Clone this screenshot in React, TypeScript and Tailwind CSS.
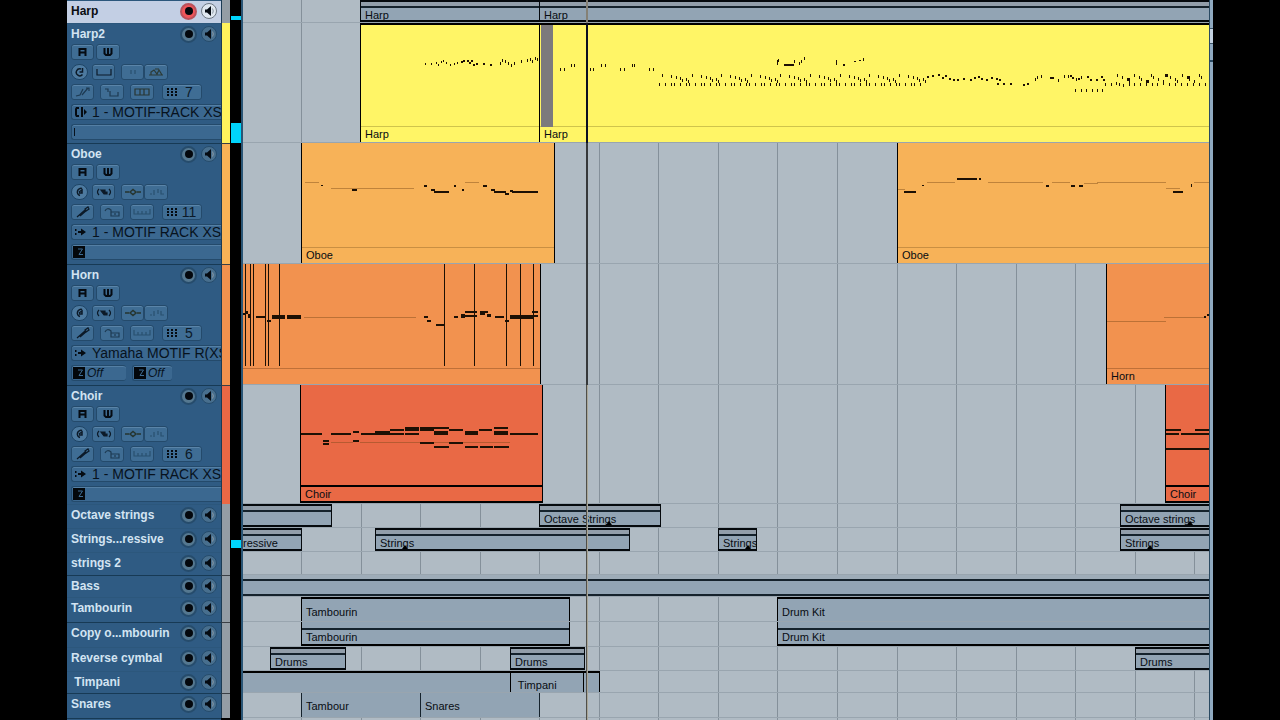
import React from 'react';
import clsx from 'clsx';

// Timeline pixels hidden to the left of the first visible one
const SCROLL_X = 243;
const BAR_WIDTH = 59.55;
const FIRST_BAR = 301;
const OPEN_END = 4000;

type Note = [x: number, y: number, w: number, h: number];

interface Clip {
  start: number;
  end: number;
  label?: string;
  kind: 'folded' | 'notes' | 'plain' | 'lower' | 'open' | 'bass';
  color?: string;
  foot?: string;
  notes?: Note[];
  thin?: Note[];
  marker?: number;
}

interface Track {
  name: string;
  height: string;
  strip: string;
  level?: string;
  selected?: boolean;
  divider?: boolean;
  output?: string;
  channel?: string;
  extra?: 'empty' | 'patch' | 'off';
  clips: Clip[];
}

const dots = (points: [number, number][], w = 1, h = 3): Note[] =>
  points.map(([x, y]) => [x, y, w, h]);

const harpIntro: Note[] = [
  ...dots([[425, 38], [431, 38], [436, 37], [438, 39], [441, 36], [443, 35], [446, 37], [450, 39], [454, 38], [457, 37]], 1, 2),
  ...dots([[461, 36], [463, 35], [467, 35], [469, 37], [471, 35], [473, 39], [476, 38], [483, 38], [490, 39]], 2, 2),
  ...dots([[500, 37], [502, 34], [505, 35], [508, 37], [511, 39], [514, 37], [521, 35], [527, 34], [530, 33], [532, 35], [535, 32], [537, 33]]),
];

const harpPattern: Note[] = [0, 1, 2, 3, 4, 5, 6, 7, 8].flatMap((i) => {
  const x = 662 + Math.round(i * 29.6);
  return dots([[x, 49], [x + 9, 50], [x + 14, 51], [x + 18, 52], [x + 20, 54], [x + 24, 53], [x + 26, 55]]);
});

const harpBass: Note[] = Array.from({ length: 53 }, (_, i): Note => [659 + i * 5 + (i % 3), 58, 1, 3]);

const harpTail: Note[] = Array.from({ length: 22 }, (_, i): Note => [
  1117 + i * 4 + (i % 3), 49 + ((i * 5) % 4) * 2, i % 5 === 2 ? 3 : 1, 3,
]);

const harpMain: Note[] = [
  ...dots([
    [542, 39], [544, 39], [560, 43], [564, 43], [571, 39], [574, 39], [590, 43], [593, 43],
    [601, 39], [605, 39], [620, 43], [624, 43], [632, 39], [634, 39], [649, 43], [653, 43],
  ]),
  ...harpPattern,
  ...harpBass,
  [777, 35, 1, 5], [778, 34, 1, 3], [784, 39, 10, 2], [794, 35, 1, 3], [799, 37, 1, 3], [801, 35, 1, 3], [804, 32, 1, 3],
  [836, 35, 1, 5], [843, 39, 2, 2], [854, 36, 2, 1], [859, 35, 2, 1], [863, 33, 1, 3],
  ...dots([
    [927, 51], [932, 50], [938, 49], [942, 52], [945, 50], [949, 53], [953, 54], [957, 54], [963, 53],
    [970, 54], [974, 52], [978, 51], [981, 53], [986, 54], [991, 52], [996, 53], [999, 54],
  ], 2, 2),
  ...dots([[997, 58], [1003, 58], [1010, 58], [1023, 59], [1027, 58]], 2, 2),
  ...dots([[1035, 53], [1037, 51], [1041, 50], [1058, 54], [1064, 50], [1068, 50], [1076, 53], [1081, 51]]),
  [1050, 52, 4, 2],
  ...dots([[1070, 50], [1072, 52], [1078, 53], [1087, 51], [1090, 54], [1096, 54], [1101, 51], [1103, 54]], 2, 2),
  ...harpTail,
  ...dots([
    [1105, 58], [1111, 58], [1116, 57], [1119, 58], [1123, 59], [1129, 58], [1134, 58], [1140, 58], [1146, 58],
    [1152, 58], [1157, 58], [1163, 57], [1169, 58], [1175, 58], [1181, 58], [1187, 58], [1193, 58], [1199, 58], [1205, 58],
  ]),
  ...dots([[1075, 64], [1081, 64], [1086, 64], [1092, 64], [1097, 64], [1102, 64]]),
];

const oboeFirst: Note[] = [
  [321, 42, 2, 1], [352, 46, 5, 2], [424, 42, 3, 2], [431, 46, 4, 2], [434, 48, 15, 2], [454, 42, 2, 2],
  [462, 46, 2, 2], [483, 42, 4, 2], [491, 46, 4, 2], [494, 48, 12, 2], [505, 50, 4, 2], [510, 47, 3, 2], [512, 48, 26, 2],
];

const hornFirst: Note[] = [
  [245, 0, 1, 102], [250, 0, 1, 102], [253, 0, 1, 102], [265, 0, 1, 102], [268, 0, 1, 102], [279, 0, 1, 102],
  [444, 0, 1, 102], [474, 0, 1, 102], [506, 0, 1, 102], [520, 0, 1, 102], [533, 0, 1, 102],
  [243, 49, 3, 2], [245, 47, 3, 3], [248, 50, 3, 4], [256, 52, 9, 2], [267, 56, 4, 2],
  [272, 51, 13, 4], [287, 51, 14, 4],
  [424, 52, 4, 2], [427, 56, 4, 2], [436, 60, 8, 2], [454, 52, 4, 2], [461, 50, 4, 4], [465, 47, 12, 2], [463, 51, 14, 2],
  [480, 47, 5, 4], [484, 47, 4, 2], [487, 50, 4, 3], [495, 52, 9, 2], [505, 56, 4, 2], [510, 51, 24, 4], [532, 47, 6, 2], [532, 51, 6, 2],
];

const choirFirst: Note[] = [
  [300, 48, 22, 2], [323, 55, 6, 2], [323, 58, 6, 2], [331, 48, 20, 2], [353, 46, 6, 2], [353, 55, 6, 2],
  [361, 48, 43, 2], [375, 46, 15, 3], [390, 44, 14, 2], [405, 42, 14, 4], [405, 48, 14, 2], [420, 42, 29, 2],
  [420, 44, 14, 2], [434, 46, 14, 4], [449, 44, 14, 2], [465, 46, 13, 4], [479, 44, 13, 2], [494, 42, 14, 2],
  [494, 46, 14, 4], [510, 48, 28, 2], [420, 57, 14, 2], [434, 61, 15, 2], [449, 57, 14, 2], [465, 61, 13, 2],
  [480, 61, 13, 2], [494, 61, 15, 2],
];

const tracks: Track[] = [
  {
    name: 'Harp', height: 'h-[23px]', strip: 'bg-[#949da5]', level: 'top-4 h-1', selected: true,
    clips: [
      { start: 360, end: 540, label: 'Harp', kind: 'folded' },
      { start: 539, end: OPEN_END, label: 'Harp', kind: 'folded' },
    ],
  },
  {
    name: 'Harp2', height: 'h-[120px]', strip: 'bg-[#fff25c]', level: 'bottom-0 h-5',
    output: '1 - MOTIF-RACK XS', channel: '7', extra: 'empty',
    clips: [
      { start: 360, end: 540, label: 'Harp', kind: 'notes', color: 'bg-[#fff566] border-t-2', foot: 'border-t border-[#cfc44c]', notes: harpIntro },
      { start: 539, end: OPEN_END, label: 'Harp', kind: 'notes', color: 'bg-[#fff566] border-t-2', foot: 'border-t border-[#cfc44c]', notes: harpMain },
    ],
  },
  {
    name: 'Oboe', height: 'h-[121px]', strip: 'bg-[#f8b256]', divider: true,
    output: '1 - MOTIF RACK XS', channel: '11', extra: 'patch',
    clips: [
      {
        start: 301, end: 555, label: 'Oboe', kind: 'notes', color: 'bg-[#f7b258]', foot: 'border-t border-[#c98f42]', notes: oboeFirst,
        thin: [[305, 39, 14, 1], [331, 45, 83, 1], [465, 39, 14, 1]],
      },
      {
        start: 897, end: OPEN_END, label: 'Oboe', kind: 'notes', color: 'bg-[#f7b258]', foot: 'border-t border-[#c98f42]',
        notes: [[904, 48, 12, 2], [922, 42, 2, 1], [957, 35, 20, 2], [979, 35, 2, 2], [1046, 42, 3, 2], [1071, 42, 4, 2], [1079, 42, 4, 2], [1173, 48, 10, 2], [1191, 41, 1, 3]],
        thin: [[898, 46, 7, 1], [927, 39, 28, 1], [988, 39, 55, 1], [1052, 39, 18, 1], [1084, 40, 14, 1], [1097, 39, 69, 1], [1166, 45, 14, 1], [1194, 39, 30, 1]],
      },
    ],
  },
  {
    name: 'Horn', height: 'h-[121px]', strip: 'bg-[#f2924e]', divider: true,
    output: 'Yamaha MOTIF R(XS', channel: '5', extra: 'off',
    clips: [
      { start: 240, end: 541, kind: 'notes', color: 'bg-[#f2924f]', foot: 'border-t border-[#bf7038]', notes: hornFirst, thin: [[304, 53, 112, 1]] },
      {
        start: 1106, end: OPEN_END, label: 'Horn', kind: 'notes', color: 'bg-[#f2924f]', foot: 'border-t border-[#bf7038]',
        notes: [[1204, 52, 2, 2], [1207, 50, 4, 2]], thin: [[1107, 57, 59, 1], [1164, 53, 40, 1]],
      },
    ],
  },
  {
    name: 'Choir', height: 'h-[119px]', strip: 'bg-[#ea6845]', divider: true,
    output: '1 - MOTIF RACK XS', channel: '6', extra: 'patch',
    clips: [
      { start: 300, end: 543, label: 'Choir', kind: 'notes', color: 'bg-[#e96945] border-b-2', foot: 'border-t-2 border-black', notes: choirFirst, thin: [[331, 57, 22, 1], [360, 57, 150, 1]] },
      {
        start: 1165, end: OPEN_END, label: 'Choir', kind: 'notes', color: 'bg-[#e96945] border-b-2', foot: 'border-t-2 border-black',
        notes: [[1165, 44, 16, 2], [1195, 44, 30, 2], [1165, 48, 14, 2], [1181, 48, 44, 2], [1165, 63, 60, 2]],
      },
    ],
  },
  {
    name: 'Octave strings', height: 'h-6', strip: 'bg-[#949da5]',
    clips: [
      { start: 240, end: 332, kind: 'folded' },
      { start: 539, end: 661, label: 'Octave Strings', kind: 'folded', marker: 66 },
      { start: 1120, end: OPEN_END, label: 'Octave strings', kind: 'folded', marker: 66 },
    ],
  },
  {
    name: 'Strings...ressive', height: 'h-6', strip: 'bg-[#949da5]', level: 'bottom-1 h-2',
    clips: [
      { start: 238, end: 302, label: 'ressive', kind: 'folded' },
      { start: 375, end: 630, label: 'Strings', kind: 'folded', marker: 26 },
      { start: 718, end: 757, label: 'Strings', kind: 'folded', marker: 26 },
      { start: 1120, end: OPEN_END, label: 'Strings', kind: 'folded', marker: 26 },
    ],
  },
  { name: 'strings 2', height: 'h-[23px]', strip: 'bg-[#949da5]', clips: [] },
  { name: 'Bass', height: 'h-[22px]', strip: 'bg-[#949da5]', divider: true, clips: [{ start: 240, end: OPEN_END, kind: 'bass' }] },
  {
    name: 'Tambourin', height: 'h-[25px]', strip: 'bg-[#949da5]',
    clips: [
      { start: 301, end: 570, label: 'Tambourin', kind: 'plain' },
      { start: 777, end: OPEN_END, label: 'Drum Kit', kind: 'plain' },
    ],
  },
  {
    name: 'Copy o...mbourin', height: 'h-[25px]', strip: 'bg-[#949da5]', divider: true,
    clips: [
      { start: 301, end: 570, label: 'Tambourin', kind: 'lower' },
      { start: 777, end: OPEN_END, label: 'Drum Kit', kind: 'lower' },
    ],
  },
  {
    name: 'Reverse cymbal', height: 'h-6', strip: 'bg-[#949da5]',
    clips: [
      { start: 270, end: 346, label: 'Drums', kind: 'folded' },
      { start: 510, end: 585, label: 'Drums', kind: 'folded' },
      { start: 1135, end: OPEN_END, label: 'Drums', kind: 'folded' },
    ],
  },
  {
    name: ' Timpani', height: 'h-[22px]', strip: 'bg-[#949da5]',
    clips: [
      { start: 240, end: 511, kind: 'plain' },
      { start: 510, end: 584, label: ' Timpani', kind: 'plain' },
      { start: 583, end: 600, kind: 'plain' },
    ],
  },
  {
    name: 'Snares', height: 'h-[25px]', strip: 'bg-[#949da5]', divider: true,
    clips: [
      { start: 301, end: 421, label: 'Tambour', kind: 'open' },
      { start: 420, end: 540, label: 'Snares', kind: 'open' },
    ],
  },
];

const KEY = 'flex h-4 items-center justify-center rounded-[3px] border border-[#244a6b] bg-[#3f6d94] shadow-[inset_0_1px_0_#5a84a8] text-[#0c1a28]';
const FIELD = 'flex h-4 items-center rounded-l-[3px] border border-r-0 border-[#244a6b] bg-[#3b6890] shadow-[inset_0_1px_0_#547fa4]';

const SpeakerIcon = () => (
  <svg viewBox="0 0 14 14" className="size-3.5">
    <path d="M3 5.5h2l4-3.5v10L5 8.5H3z" fill="#050b12" />
    <path d="M10.5 4.5q1.6 2.5 0 5" fill="none" stroke="#8d9aa5" />
  </svg>
);

const PatchIcon = () => (
  <svg viewBox="0 0 12 12" className="ml-px size-3 shrink-0">
    <path d="M0 0h12v12H0z" fill="#03070b" />
    <path d="M5 3h4.500L6 8.500h4" fill="none" stroke="#3f6d94" />
  </svg>
);

const Icon = ({ children }: { children: React.ReactNode }) => (
  <svg viewBox="0 0 18 12" className="h-3 w-[18px]" fill="none" stroke="currentColor" strokeWidth="1.2">
    {children}
  </svg>
);

const TrackControls = ({ track }: { track: Track }) => {
  const harp = track.extra === 'empty';
  return (
    <div className="flex flex-col gap-1">
      <div className="flex gap-0.5">
        <button aria-label="Read automation" className={clsx(KEY, 'w-[23px]')}>
          <svg viewBox="0 0 10 8" className="h-2 w-2.5" fill="none" stroke="#050b12" strokeWidth="2"><path d="M1.5 8V1h6v3.5h-6M7.5 4v4" /></svg>
        </button>
        <button aria-label="Write automation" className={clsx(KEY, 'w-6')}>
          <svg viewBox="0 0 10 8" className="h-2 w-2.5" fill="none" stroke="#050b12" strokeWidth="2"><path d="M1.5 0v5.500L3 7h4l1.500-1.500V0M5 0v7" /></svg>
        </button>
      </div>
      <div className="flex">
        <button aria-label="Edit instrument" className="mr-1 flex h-4 w-[17px] items-center justify-center rounded-full border border-[#1f4566] bg-[#4d7aa0] text-[#0c1a28]">
          <svg viewBox="0 0 10 10" className="size-2.5" fill="none" stroke="currentColor" strokeWidth="1.5">
            <path d={harp ? 'M6 2A3.500 3.500 0 1 0 7.500 7.500M4.500 5h3V1' : 'M7 1.500A3.500 3.500 0 1 0 5 8.500M4 5l3-2v3H4'} />
          </svg>
        </button>
        <button aria-label="Inserts" className={clsx(KEY, 'mr-1.5 w-[23px]')}>
          <Icon>{harp ? <path d="M2 3v6h14V3" /> : <><path d="M4 3Q1 6 4 9M14 3q3 3 0 6" /><path d="M6 4h4v2h2v2H9z" fill="currentColor" /></>}</Icon>
        </button>
        <button aria-label="Equalizer" className={clsx(KEY, 'w-[23px]')}>
          <Icon>{harp ? <path d="M7 4v4M11 4v4" stroke="#28506f" /> : <><path d="M1 6h4M13 6h4M6 6l3-2.500L12 6 9 8.500z" stroke="#26352f" strokeWidth="1.500" /></>}</Icon>
        </button>
        <button aria-label="Sends" className={clsx(KEY, 'w-6')}>
          <Icon>{harp ? <path d="M2 9h14M4 9V6l3-2 3 4 2-4 3 5M8 3h4" stroke="#2c3a35" /> : <path d="M3 8h2M7 4v5M11 3v4M14 4v4h3" stroke="#28506f" />}</Icon>
        </button>
      </div>
      <div className="flex">
        <button aria-label="Edit channel" className={clsx(KEY, 'mr-1.5 w-[23px]')}>
          <Icon>{harp ? <path d="M2 10l4-1 3-6M8 9l6-7M12 2h3v3" stroke="#1d3a52" /> : <path d="M3 11l8-7M6 10l7-6M11 3l3-2 1 2-3 2z" />}</Icon>
        </button>
        <button aria-label="Lock" className={clsx(KEY, 'mr-1.5 w-6')}>
          <Icon>{harp ? <path d="M2 3h3v3M7 5v5h8V6" stroke="#1d3a52" /> : <path d="M2 5q2-4 6-1v6h8V6H8M12 7v2" stroke="#1d3a52" />}</Icon>
        </button>
        <button aria-label="Lanes" className={clsx(KEY, 'mr-2 w-6')}>
          <Icon>{harp ? <path d="M2 3h14v6H2zM7 3v6M11 3v6" stroke="#293632" /> : <path d="M1 3v5h16V3M5 5v3M9 5v3M13 5v3" stroke="#28506f" />}</Icon>
        </button>
        <label className={clsx(KEY, 'w-10 pl-1')}>
          <svg viewBox="0 0 10 9" className="h-[9px] w-2.5 shrink-0" fill="#050b12">
            {[0, 4, 8].map((x) => [0, 3, 6].map((y) => <rect key={`${x}-${y}`} x={x} y={y} width="2" height="2" />))}
          </svg>
          <select aria-label={`${track.name} MIDI channel`} className="w-full appearance-none bg-transparent text-center text-sm leading-3.5 outline-none">
            <option>{track.channel}</option>
          </select>
        </label>
      </div>
      <label className={FIELD}>
        <svg viewBox="0 0 14 10" className="mr-1 ml-0.5 h-2.5 w-3.5 shrink-0" fill="#050b12">
          {harp ? <path d="M5 0H2L1 2v6l1 2h3V8H3V2h2zM7 0h2v10H7zM10 2l3 3-3 3z" /> : <path d="M1 2h1.500v2H1zM1 6h1.500v2H1zM4 4h3V1.500L12 5 7 8.500V6H4z" />}
        </svg>
        <select aria-label={`${track.name} output`} className="w-0 flex-1 appearance-none overflow-hidden bg-transparent text-sm leading-3.5 text-[#07121d] outline-none">
          <option>{track.output}</option>
        </select>
      </label>
      {track.extra === 'off' ? (
        <div className="flex gap-1.5">
          {['Bank', 'Program'].map((what, i) => (
            <label key={what} className={clsx(FIELD, 'rounded-r-[3px] border-r', i === 0 ? 'w-[55px]' : 'w-10')}>
              <PatchIcon />
              <select aria-label={what} className="ml-0.5 w-full appearance-none bg-transparent text-xs leading-3.5 text-[#07121d] italic outline-none">
                <option>Off</option>
              </select>
            </label>
          ))}
        </div>
      ) : (
        <button aria-label="Program" className={FIELD}>
          {track.extra === 'patch' ? <PatchIcon /> : <span className="ml-0.5 h-2 w-px bg-[#07121d]" />}
        </button>
      )}
    </div>
  );
};

const TrackHeader = ({ track }: { track: Track }) => (
  <div
    className={clsx(
      'flex flex-col overflow-hidden border-t pl-1',
      track.height,
      track.divider ? 'border-[#173a55]' : 'border-[#2c577c]',
      track.selected ? 'bg-[#c3cfe4]' : 'bg-[#2f5b83]',
    )}
  >
    <div className="flex h-5 shrink-0 items-center gap-1 pr-1">
      <span className={clsx('flex-1 text-xs font-bold whitespace-pre', track.selected ? 'text-[#0a0d12]' : 'text-[#d3e4f2]')}>
        {track.name}
      </span>
      <button
        aria-label={`Record ${track.name}`}
        className={clsx(
          'flex size-[17px] items-center justify-center rounded-full border-2',
          track.selected ? 'border-[#b8525c] bg-[#f0555a]' : 'border-[#264c6c] bg-[#557890]',
        )}
      >
        <span className="size-2 rounded-full bg-[#04080d]" />
      </button>
      <button
        aria-label={`Mute ${track.name}`}
        className={clsx(
          'flex size-4 items-center justify-center rounded-full border',
          track.selected ? 'border-[#6d7884] bg-[#dfe7f0]' : 'border-[#264c6c] bg-[#486f8e]',
        )}
      >
        <SpeakerIcon />
      </button>
    </div>
    {track.output && <TrackControls track={track} />}
  </div>
);

const NoteView = ({ clip }: { clip: Clip }) => {
  const width = Math.min(clip.end - clip.start, 1100);
  return (
    <svg width={width} height={102} viewBox={`${clip.start + 1} 0 ${width} 102`} className="block" shapeRendering="crispEdges">
      {clip.thin?.map(([x, y, w, h], i) => <rect key={i} x={x} y={y} width={w} height={h} fill="#7a4a18" opacity="0.45" />)}
      {clip.notes?.map(([x, y, w, h], i) => <rect key={i} x={x} y={y} width={w} height={h} fill="#1d1004" />)}
    </svg>
  );
};

const ClipView = ({ clip }: { clip: Clip }) => {
  const style = { left: clip.start - SCROLL_X, width: clip.end - clip.start };
  const label = (
    <span className="block overflow-hidden pl-1 text-[11px] leading-3.5 whitespace-pre text-[#080c12]">{clip.label}</span>
  );

  switch (clip.kind) {
    case 'notes':
      return (
        <div style={style} className={clsx('absolute inset-y-0 flex flex-col overflow-hidden border-x border-black', clip.color)}>
          <div className="flex-1 overflow-hidden"><NoteView clip={clip} /></div>
          <div className={clsx('h-4 shrink-0', clip.foot)}>{label}</div>
        </div>
      );
    case 'folded':
      return (
        <div style={style} className="absolute inset-y-0 overflow-hidden border-x border-y-2 border-[#05090d] bg-[#92a4b4]">
          <div className="h-1.5 border-b-2 border-[#15222c] bg-[#929eaa]" />
          {label}
          {clip.marker && (
            <svg viewBox="0 0 6 4" style={{ left: clip.marker }} className="absolute bottom-0 h-1 w-1.5"><path d="M0 4l3-4 3 4z" /></svg>
          )}
        </div>
      );
    case 'bass':
      return (
        <div style={style} className="absolute inset-y-0 border-b-2 border-[#15222c] bg-[#92a4b4]">
          <div className="h-1.5 border-b-2 border-[#15222c] bg-[#9eacb8]" />
        </div>
      );
    case 'lower':
      return (
        <div style={style} className="absolute inset-y-0 border-x border-b-2 border-black bg-[#92a4b4]">
          <div className="h-2 border-b-2 border-[#15222c]" />
          {label}
        </div>
      );
    case 'open':
      return <div style={style} className="absolute inset-y-0 border-x border-[#15222c] bg-[#92a4b4] pt-1.5">{label}</div>;
    default:
      return (
        <div style={style} className="absolute inset-y-0 flex flex-col justify-center border-x border-t-2 border-black bg-[#92a4b4] pt-1">
          {label}
        </div>
      );
  }
};

const GridLines = () => (
  <div className="absolute inset-0">
    {Array.from({ length: 40 }, (_, i) => (
      <span key={i} style={{ left: Math.round(FIRST_BAR + i * BAR_WIDTH) - SCROLL_X }} className="absolute inset-y-0 w-px bg-[#84909a]" />
    ))}
  </div>
);

const App = () => {
  return (
    <div className="min-h-screen overflow-hidden bg-black px-[67px] font-['Liberation_Sans',sans-serif]">
      <main className="flex">
        <div className="w-[154px] shrink-0">
          {tracks.map((track) => <TrackHeader key={track.name} track={track} />)}
          <div className="h-0.5 border-t border-[#173a55] bg-[#2f5b83]" />
        </div>

        <div className="w-[22px] shrink-0 border-r-2 border-[#2a5575] bg-black">
          {tracks.map((track) => (
            <div key={track.name} className={clsx('relative flex', track.height)}>
              <div className={clsx('w-[9px] border-l border-[#1c3b54]', track.strip, track.divider && 'border-t border-t-[#3a3f45]')} />
              {track.level && <span className={clsx('absolute right-0 left-2.5 bg-[#00d4fb]', track.level)} />}
            </div>
          ))}
        </div>

        <div className="relative min-w-0 flex-1 overflow-hidden bg-[#b0bbc4]">
          <GridLines />
          {tracks.map((track) => (
            <div key={track.name} className={clsx('relative border-b border-[#99a5af]', track.height)}>
              {track.clips.map((clip) => <ClipView key={clip.start} clip={clip} />)}
              {track.name === 'Harp2' && <span style={{ left: 541 - SCROLL_X }} className="absolute top-0.5 h-[102px] w-3 bg-[#7c7a7c]" />}
            </div>
          ))}
          {/* Playhead */}
          <div style={{ left: 586 - SCROLL_X }} className="absolute inset-y-0 flex w-0.5 flex-col">
            <span className="h-[23px] bg-[#858176]" />
            <span className="h-[120px] bg-[#0b1020]" />
            <span className="h-[242px] bg-[#35383a]" />
            <span className="flex-1 border-r border-[#aaa696] bg-[#4f4f4b]" />
          </div>
        </div>

        <div className="flex w-1 shrink-0 flex-col border-l border-[#2a4a62] bg-[#8fa9c0]">
          <span className="mt-7 h-4 border-y border-[#3c5468] bg-[#c4d2e0]" />
          <span className="mt-4 h-0.5 bg-[#2a4a62]" />
        </div>
      </main>
    </div>
  );
};

export default App;
